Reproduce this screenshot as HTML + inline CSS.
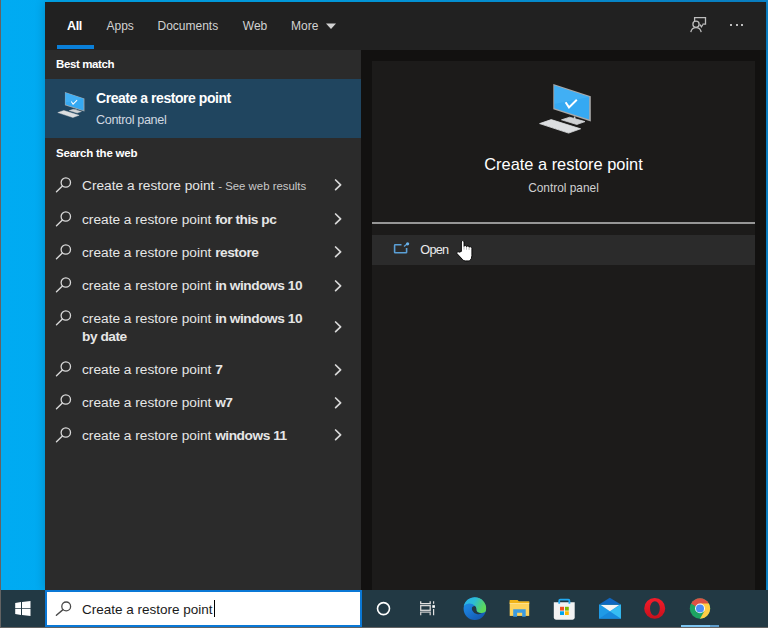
<!DOCTYPE html>
<html><head><meta charset="utf-8">
<style>
*{margin:0;padding:0;box-sizing:border-box}
html,body{width:768px;height:628px;overflow:hidden}
body{position:relative;background:linear-gradient(to right,#00abf2 0%,#02a6ee 40%,#0a88d0 100%);font-family:"Liberation Sans",sans-serif;color:#fff}
.a{position:absolute}
.t{position:absolute;white-space:nowrap;line-height:1}
.tab{font-size:12px;color:#d2d2d2;top:19.6px}
.row{left:82px;font-size:13.7px;color:#e6e6e6}
.row b{letter-spacing:-0.45px}
svg{overflow:visible}
</style></head><body>
<!-- desktop edges -->
<div class="a" style="left:0;top:0;width:1px;height:628px;background:#636363"></div>
<div class="a" style="left:45px;top:2px;width:721px;height:588px;background:#212121;box-shadow:0 0 10px 0 rgba(0,0,0,0.2)"></div>

<!-- header -->
<div class="a" style="left:45px;top:2px;width:721px;height:48px;background:#212121"></div>
<div class="t" style="left:67px;top:20px;font-size:12.5px;font-weight:bold;letter-spacing:-0.4px;color:#fff">All</div>
<div class="t tab" style="left:106.5px">Apps</div>
<div class="t tab" style="left:157.5px">Documents</div>
<div class="t tab" style="left:242.8px">Web</div>
<div class="t tab" style="left:291px">More</div>
<svg class="a" style="left:324.5px;top:22.8px" width="12" height="7"><polygon points="1,0.5 11,0.5 6,6" fill="#d2d2d2"/></svg>
<div class="a" style="left:57px;top:45px;width:37px;height:4px;background:#0a7fd8"></div>
<!-- feedback icon -->
<svg class="a" style="left:688px;top:14px" width="22" height="22" viewBox="0 0 22 22">
 <path d="M6.6,7 V3.6 H17.5 V10.2 H14.5" fill="none" stroke="#bdbdbd" stroke-width="1.3"/>
 <path d="M11.8,10.4 L13.4,12.8 L14.8,10.6" fill="none" stroke="#bdbdbd" stroke-width="1.2"/>
 <circle cx="8" cy="10.3" r="3.1" fill="none" stroke="#bdbdbd" stroke-width="1.3"/>
 <path d="M2.8,18.2 C3.4,14.8 5.6,13.6 8,13.6 C10.4,13.6 12.6,14.8 13.2,18.2" fill="none" stroke="#bdbdbd" stroke-width="1.3"/>
</svg>
<div class="a" style="left:730px;top:24px;width:2px;height:2px;background:#bdbdbd"></div>
<div class="a" style="left:736px;top:24px;width:2px;height:2px;background:#bdbdbd"></div>
<div class="a" style="left:741px;top:24px;width:2px;height:2px;background:#bdbdbd"></div>

<!-- left pane -->
<div class="a" style="left:45px;top:50px;width:317px;height:540px;background:#2b2b2b"></div>
<div class="t" style="left:56px;top:59px;font-size:11.5px;font-weight:bold;letter-spacing:-0.38px;color:#fff">Best match</div>
<div class="a" style="left:45px;top:79px;width:317px;height:59px;background:#20455f"></div>
<svg class="a" style="left:56.5px;top:92px" width="28" height="26" viewBox="0 0 52 50">
 <use href="#pc"/>
</svg>
<div class="t" style="left:96px;top:91.1px;font-size:14px;font-weight:bold;letter-spacing:-0.45px;color:#fff">Create a restore point</div>
<div class="t" style="left:96px;top:114px;font-size:12.6px;letter-spacing:-0.35px;color:#d0d8e0">Control panel</div>
<div class="t" style="left:56px;top:147.6px;font-size:11.5px;font-weight:bold;letter-spacing:-0.22px;color:#fff">Search the web</div>

<!-- rows -->
<div class="t row" style="top:178.5px">Create a restore point <span style="font-size:11.4px;color:#c8c8c8">- See web results</span></div>
<svg class="a" style="left:55px;top:176.6px" width="17" height="16" viewBox="0 0 17 16"><circle cx="10.8" cy="5.5" r="4.7" fill="none" stroke="#d8d8d8" stroke-width="1.3"/><line x1="7.4" y1="8.9" x2="1.5" y2="14.7" stroke="#d8d8d8" stroke-width="1.4" stroke-linecap="round"/></svg>
<svg class="a" style="left:334px;top:178.9px" width="9" height="12" viewBox="0 0 9 12"><polyline points="1.6,1 6.6,5.8 1.6,10.6" fill="none" stroke="#d8d8d8" stroke-width="1.7" stroke-linecap="round" stroke-linejoin="round"/></svg>
<div class="t row" style="top:212.6px">create a restore point <b>for this pc</b></div>
<svg class="a" style="left:55px;top:210.7px" width="17" height="16" viewBox="0 0 17 16"><circle cx="10.8" cy="5.5" r="4.7" fill="none" stroke="#d8d8d8" stroke-width="1.3"/><line x1="7.4" y1="8.9" x2="1.5" y2="14.7" stroke="#d8d8d8" stroke-width="1.4" stroke-linecap="round"/></svg>
<svg class="a" style="left:334px;top:213.0px" width="9" height="12" viewBox="0 0 9 12"><polyline points="1.6,1 6.6,5.8 1.6,10.6" fill="none" stroke="#d8d8d8" stroke-width="1.7" stroke-linecap="round" stroke-linejoin="round"/></svg>
<div class="t row" style="top:246.0px">create a restore point <b>restore</b></div>
<svg class="a" style="left:55px;top:244.1px" width="17" height="16" viewBox="0 0 17 16"><circle cx="10.8" cy="5.5" r="4.7" fill="none" stroke="#d8d8d8" stroke-width="1.3"/><line x1="7.4" y1="8.9" x2="1.5" y2="14.7" stroke="#d8d8d8" stroke-width="1.4" stroke-linecap="round"/></svg>
<svg class="a" style="left:334px;top:246.4px" width="9" height="12" viewBox="0 0 9 12"><polyline points="1.6,1 6.6,5.8 1.6,10.6" fill="none" stroke="#d8d8d8" stroke-width="1.7" stroke-linecap="round" stroke-linejoin="round"/></svg>
<div class="t row" style="top:279.2px">create a restore point <b>in windows 10</b></div>
<svg class="a" style="left:55px;top:277.3px" width="17" height="16" viewBox="0 0 17 16"><circle cx="10.8" cy="5.5" r="4.7" fill="none" stroke="#d8d8d8" stroke-width="1.3"/><line x1="7.4" y1="8.9" x2="1.5" y2="14.7" stroke="#d8d8d8" stroke-width="1.4" stroke-linecap="round"/></svg>
<svg class="a" style="left:334px;top:279.6px" width="9" height="12" viewBox="0 0 9 12"><polyline points="1.6,1 6.6,5.8 1.6,10.6" fill="none" stroke="#d8d8d8" stroke-width="1.7" stroke-linecap="round" stroke-linejoin="round"/></svg>
<div class="a row" style="top:309.9px;line-height:18px;white-space:nowrap">create a restore point <b>in windows 10</b><br><b>by date</b></div>
<svg class="a" style="left:55px;top:310.1px" width="17" height="16" viewBox="0 0 17 16"><circle cx="10.8" cy="5.5" r="4.7" fill="none" stroke="#d8d8d8" stroke-width="1.3"/><line x1="7.4" y1="8.9" x2="1.5" y2="14.7" stroke="#d8d8d8" stroke-width="1.4" stroke-linecap="round"/></svg>
<svg class="a" style="left:334px;top:321.1px" width="9" height="12" viewBox="0 0 9 12"><polyline points="1.6,1 6.6,5.8 1.6,10.6" fill="none" stroke="#d8d8d8" stroke-width="1.7" stroke-linecap="round" stroke-linejoin="round"/></svg>
<div class="t row" style="top:363.2px">create a restore point <b>7</b></div>
<svg class="a" style="left:55px;top:361.3px" width="17" height="16" viewBox="0 0 17 16"><circle cx="10.8" cy="5.5" r="4.7" fill="none" stroke="#d8d8d8" stroke-width="1.3"/><line x1="7.4" y1="8.9" x2="1.5" y2="14.7" stroke="#d8d8d8" stroke-width="1.4" stroke-linecap="round"/></svg>
<svg class="a" style="left:334px;top:363.6px" width="9" height="12" viewBox="0 0 9 12"><polyline points="1.6,1 6.6,5.8 1.6,10.6" fill="none" stroke="#d8d8d8" stroke-width="1.7" stroke-linecap="round" stroke-linejoin="round"/></svg>
<div class="t row" style="top:396.2px">create a restore point <b>w7</b></div>
<svg class="a" style="left:55px;top:394.3px" width="17" height="16" viewBox="0 0 17 16"><circle cx="10.8" cy="5.5" r="4.7" fill="none" stroke="#d8d8d8" stroke-width="1.3"/><line x1="7.4" y1="8.9" x2="1.5" y2="14.7" stroke="#d8d8d8" stroke-width="1.4" stroke-linecap="round"/></svg>
<svg class="a" style="left:334px;top:396.6px" width="9" height="12" viewBox="0 0 9 12"><polyline points="1.6,1 6.6,5.8 1.6,10.6" fill="none" stroke="#d8d8d8" stroke-width="1.7" stroke-linecap="round" stroke-linejoin="round"/></svg>
<div class="t row" style="top:428.9px">create a restore point <b>windows 11</b></div>
<svg class="a" style="left:55px;top:427.0px" width="17" height="16" viewBox="0 0 17 16"><circle cx="10.8" cy="5.5" r="4.7" fill="none" stroke="#d8d8d8" stroke-width="1.3"/><line x1="7.4" y1="8.9" x2="1.5" y2="14.7" stroke="#d8d8d8" stroke-width="1.4" stroke-linecap="round"/></svg>
<svg class="a" style="left:334px;top:429.3px" width="9" height="12" viewBox="0 0 9 12"><polyline points="1.6,1 6.6,5.8 1.6,10.6" fill="none" stroke="#d8d8d8" stroke-width="1.7" stroke-linecap="round" stroke-linejoin="round"/></svg>

<!-- right pane -->
<div class="a" style="left:361px;top:50px;width:405px;height:540px;background:#121110"></div>
<div class="a" style="left:372px;top:61px;width:383px;height:529px;background:#1c1b1a"></div>
<svg class="a" style="left:538.5px;top:84px" width="52" height="50" viewBox="0 0 52 50">
 <defs>
  <g id="pc">
   <polygon points="14.3,0 51.8,12.3 51.8,37.6 14.3,25.3" fill="#a8a8a8"/>
   <polygon points="15.3,1.6 50.2,13 50.2,35.6 15.3,24.2" fill="#35a9f2"/>
   <polygon points="15.3,1.6 50.2,13 15.3,20" fill="#4ab4f5" opacity="0.6"/>
   <polyline points="26.6,18.2 30,23.4 37.8,15.8" fill="none" stroke="#fff" stroke-width="2"/>
   <line x1="35.6" y1="32.5" x2="35.6" y2="35.5" stroke="#c8c8c8" stroke-width="1.6"/>
   <polygon points="22.5,35.8 30.7,33.2 46,37.6 37.8,40.5" fill="#d0d2d4" stroke="#d0d2d4" stroke-width="0.8" stroke-linejoin="round"/>
   <polygon points="0.6,39.6 12.2,35.6 41.6,44.8 29.6,49.1" fill="#dcdee0" stroke="#dcdee0" stroke-width="0.8" stroke-linejoin="round"/>
  </g>
 </defs>
 <use href="#pc"/>
</svg>
<div class="t" style="left:372px;width:383px;text-align:center;top:155.8px;font-size:16.4px;color:#fff">Create a restore point</div>
<div class="t" style="left:372px;width:383px;text-align:center;top:182.9px;font-size:11.9px;color:#d0d0d0">Control panel</div>
<div class="a" style="left:372px;top:222px;width:383px;height:2px;background:#969696"></div>
<div class="a" style="left:372px;top:235px;width:383px;height:30px;background:#2b2b2b"></div>
<svg class="a" style="left:390px;top:238px" width="24" height="20" viewBox="0 0 24 20">
 <path d="M11.5,6.8 H5.2 Q4.6,6.8 4.6,7.4 V14.2 Q4.6,14.8 5.2,14.8 H16 Q16.6,14.8 16.6,14.2 V10" fill="none" stroke="#5a9fd6" stroke-width="1.6"/>
 <line x1="14" y1="8.6" x2="17.6" y2="5.6" stroke="#5a9fd6" stroke-width="1.3"/>
 <circle cx="17.6" cy="5.8" r="1.6" fill="#6ab2ea"/>
</svg>
<div class="t" style="left:420.3px;top:244.3px;font-size:12.7px;letter-spacing:-0.75px;color:#ececec">Open</div>
<!-- hand cursor -->
<svg class="a" style="left:452px;top:236px" width="26" height="28" viewBox="0 0 26 28">
 <path d="M9.4,15.4 V6 Q9.4,4.6 10.7,4.6 Q12,4.6 12,6 V10.4 Q12.2,9.5 13.3,9.5 Q14.4,9.5 14.5,10.7 Q14.8,9.9 15.9,9.9 Q17,9.9 17.1,11.3 Q17.5,10.7 18.5,10.8 Q19.9,11 19.9,12.6 V19.6 Q19.9,23.4 17.4,24.9 H13.2 Q11.6,24.9 10.6,23.6 L5,17.6 Q4.4,16.8 5.2,16.1 Q6.2,15.4 7.3,16.2 Z" fill="#fff" stroke="#000" stroke-width="0.9"/>
 <path d="M12,10.6 V13.6 M14.5,11 V13.8 M17.1,11.6 V14" stroke="#9a9a9a" stroke-width="0.7"/>
</svg>

<!-- taskbar -->
<div class="a" style="left:1px;top:590px;width:767px;height:37px;background:#223944"></div>
<div class="a" style="left:0;top:627px;width:768px;height:1px;background:#636363"></div>
<svg class="a" style="left:0;top:590px" width="45" height="37" viewBox="0 590 45 37">
 <polygon points="15.2,603 21,602.1 21,608.2 15.2,608.2" fill="#fff"/>
 <polygon points="22,601.9 30.5,600.9 30.5,608.2 22,608.2" fill="#fff"/>
 <polygon points="15.2,609.1 21,609.1 21,614.9 15.2,614.1" fill="#fff"/>
 <polygon points="22,609.1 30.5,609.1 30.5,616.1 22,615.1" fill="#fff"/>
</svg>
<div class="a" style="left:45px;top:590px;width:317px;height:37px;background:#fff;border:2px solid #0a78d6"></div>
<svg class="a" style="left:54px;top:600px" width="19" height="17" viewBox="0 0 19 17">
 <circle cx="12.2" cy="6.4" r="4.4" fill="none" stroke="#4a4a4a" stroke-width="1.3"/>
 <line x1="9" y1="9.6" x2="2.4" y2="15.2" stroke="#4a4a4a" stroke-width="1.4" stroke-linecap="round"/>
</svg>
<div class="t" style="left:82px;top:602.7px;font-size:13.5px;color:#1a1a1a">Create a restore point</div>
<div class="a" style="left:213.5px;top:599.5px;width:1px;height:17.5px;background:#000"></div>

<!-- cortana -->
<svg class="a" style="left:374px;top:599px" width="20" height="20" viewBox="0 0 20 20"><circle cx="9.5" cy="9.6" r="6" fill="none" stroke="#fff" stroke-width="1.6"/></svg>
<!-- task view -->
<svg class="a" style="left:414px;top:596px" width="26" height="24" viewBox="414 596 26 24">
 <path d="M420.7,601.2 V603.6 H430.2 V601.2" fill="none" stroke="#e0e0e0" stroke-width="1.3"/>
 <rect x="420.7" y="605.6" width="9.5" height="4.7" fill="none" stroke="#d8d8d8" stroke-width="1.3"/>
 <path d="M420.7,615.2 V612.2 H430.2 V615.2" fill="none" stroke="#c8c8c8" stroke-width="1.3"/>
 <line x1="433.6" y1="601.2" x2="433.6" y2="603.8" stroke="#e0e0e0" stroke-width="1.2"/>
 <rect x="432.3" y="605.2" width="2.6" height="2.6" fill="#fff"/>
 <line x1="433.6" y1="609" x2="433.6" y2="615.2" stroke="#e0e0e0" stroke-width="1.2"/>
</svg>
<!-- edge -->
<svg class="a" style="left:460px;top:594px" width="30" height="30" viewBox="460 594 30 30">
 <defs>
  <linearGradient id="eg1" x1="0" y1="0" x2="0.7" y2="1"><stop offset="0" stop-color="#2196e8"/><stop offset="0.5" stop-color="#1a7ad6"/><stop offset="1" stop-color="#1458b0"/></linearGradient>
  <linearGradient id="eg2" x1="0" y1="0" x2="1" y2="0.4"><stop offset="0" stop-color="#2ab0ea"/><stop offset="0.5" stop-color="#2cbcd6"/><stop offset="0.78" stop-color="#48cc88"/><stop offset="1" stop-color="#5cd85c"/></linearGradient>
 </defs>
 <circle cx="474.8" cy="608.8" r="11.2" fill="url(#eg1)"/>
 <path d="M463.7,606 A11.2,11.2 0 0 1 485.8,611.2 Q484.5,613 481.5,612.9 Q478.5,613 477.2,611.8 Q476,610.6 476.3,608.5 Q476.4,606.6 474.6,605.4 Q472.2,603.4 469,603.6 Q465.6,603.9 463.7,606 Z" fill="url(#eg2)"/>
 <path d="M472,607.6 Q472.8,605.8 474.6,605.9 Q476.4,606.6 476.3,608.8 Q476.1,610.9 477.6,612.3 Q479.5,613.4 482.6,613.1 Q480.2,614.6 476.8,614 Q473.4,613.2 472.3,610.6 Q471.6,609 472,607.6 Z" fill="#223944"/>
</svg>
<!-- folder -->
<svg class="a" style="left:505px;top:596px" width="30" height="24" viewBox="505 596 30 24">
 <rect x="509.7" y="601.6" width="19.5" height="14.3" fill="#ffd35c"/>
 <path d="M509.7,600.1 H517.6 L519,601.6 H529.2 V603 H509.7 Z" fill="#f2b418"/>
 <rect x="509.7" y="603" width="19.5" height="1" fill="#ffe08a"/>
 <path d="M513.2,616.7 V609.3 H525.7 V616.7 H522.2 V612.8 H517.1 V616.7 Z" fill="#3c9be0"/>
</svg>
<!-- store -->
<svg class="a" style="left:550px;top:595px" width="30" height="28" viewBox="550 595 30 28">
 <path d="M553.8,602.2 H574.7 V617.6 Q574.7,619.7 572.6,619.7 H555.9 Q553.8,619.7 553.8,617.6 Z" fill="#f2f2f2"/>
 <path d="M559.2,603.8 V600.8 Q559.2,599.7 560.3,599.7 H568.3 Q569.4,599.7 569.4,600.8 V603.8" fill="none" stroke="#22aaf2" stroke-width="1.8"/>
 <rect x="560" y="606.8" width="4" height="3.8" fill="#f25022"/>
 <rect x="565" y="606.8" width="3.8" height="3.8" fill="#7fba00"/>
 <rect x="560" y="611.3" width="4" height="3.7" fill="#00a4ef"/>
 <rect x="565" y="611.3" width="3.8" height="3.7" fill="#ffb900"/>
</svg>
<!-- mail -->
<svg class="a" style="left:595px;top:594px" width="30" height="28" viewBox="595 594 30 28">
 <polygon points="599,604.6 609.8,597.8 620.9,604.6" fill="#0f66c0"/>
 <rect x="599" y="604.5" width="21.9" height="14.2" fill="#1f9ae6"/>
 <polygon points="609.9,611.6 620.9,604.5 620.9,618.7" fill="#36bdf2"/>
 <polygon points="599,618.7 609.9,611.6 620.9,618.7" fill="#1784d8" opacity="0.8"/>
 <polygon points="600.8,605 619.2,605 609.9,611.3" fill="#f4f4f4"/>
</svg>
<!-- opera -->
<svg class="a" style="left:640px;top:594px" width="30" height="28" viewBox="640 594 30 28">
 <defs><linearGradient id="og" x1="0" y1="0" x2="0" y2="1"><stop offset="0" stop-color="#f41c2a"/><stop offset="1" stop-color="#c8101c"/></linearGradient></defs>
 <path fill-rule="evenodd" d="M644.2,608.4 A10.5,10.35 0 1 0 665.2,608.4 A10.5,10.35 0 1 0 644.2,608.4 Z M650,608.5 A4.9,7.35 0 1 0 659.8,608.5 A4.9,7.35 0 1 0 650,608.5 Z" fill="url(#og)"/>
</svg>
<!-- chrome -->
<svg class="a" style="left:685px;top:594px" width="30" height="30" viewBox="685 594 30 30">
 <circle cx="700" cy="608.5" r="10.2" fill="#1da462"/>
 <path d="M700,608.5 L691.2,603.4 A10.2,10.2 0 0 1 708.8,603.4 Z" fill="#dd5144"/>
 <path d="M700,608.5 L708.8,603.4 A10.2,10.2 0 0 1 700,618.7 Z" fill="#ffcd46"/>
 <path d="M700,608.5 L691.2,603.4 L700,603.4 Z" fill="#dd5144"/>
 <path d="M700,603.4 H708.8 L704.4,611 Z" fill="#ffcd46"/>
 <path d="M704.4,611 L700,618.7 L695.6,611 Z" fill="#1da462"/>
 <circle cx="700" cy="608.4" r="4.9" fill="#fff"/>
 <circle cx="700" cy="608.4" r="4" fill="#4c8bf5"/>
</svg>
<div class="a" style="left:681px;top:625px;width:29px;height:2px;background:#7cc4f0"></div>
<div class="a" style="left:710px;top:625px;width:9px;height:2px;background:#5e9ccb"></div>
</body></html>
